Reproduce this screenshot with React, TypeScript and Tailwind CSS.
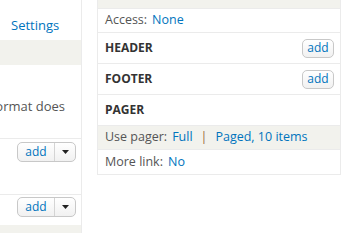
import React from "react";

const font = { fontFamily: '"Open Sans", "Liberation Sans", sans-serif' };

function SplitAdd() {
  return (
    <div className="flex h-[20px] w-[59px] items-stretch rounded-[5px] border border-[#c8c8c8] bg-gradient-to-b from-white to-[#f1f1f1] text-[12px] leading-none">
      <span className="flex w-[36px] items-center justify-center text-[#0074bd]">add</span>
      <span className="flex flex-1 items-center justify-center border-l border-[#d4d4d4]">
        <svg width="7" height="4" viewBox="0 0 7 4">
          <path d="M0 0h7L3.5 4z" fill="#222" />
        </svg>
      </span>
    </div>
  );
}

function AddButton() {
  return (
    <div className="flex h-[19px] w-[32px] items-center justify-center rounded-[5px] border border-[#c8c8c8] bg-gradient-to-b from-white to-[#f1f1f1] text-[12px] leading-none text-[#0074bd]">
      add
    </div>
  );
}

function Row({
  label,
  value,
  gray,
}: {
  label: string;
  value: React.ReactNode;
  gray?: boolean;
}) {
  return (
    <div
      className={`flex h-[24px] items-center border-b border-[#ebebeb] px-[7px] text-[12.5px] ${
        gray ? "bg-[#f2f2ed]" : "bg-white"
      }`}
    >
      <span className="text-[#555]">{label}</span>
      <span className="ml-[5px] text-[#0074bd]">{value}</span>
    </div>
  );
}

function Section({ title, add }: { title: string; add?: boolean }) {
  return (
    <div className="flex h-[31px] items-center justify-between border-b border-[#ebebeb] pl-[7px] pr-[6px]">
      <span className="text-[12px] font-bold text-[#333]">{title}</span>
      {add && <AddButton />}
    </div>
  );
}

export default function App() {
  return (
    <div className="flex h-[233px] w-[348px] overflow-hidden bg-white" style={font}>
      {/* left column, clipped */}
      <div className="flex w-[82px] shrink-0 flex-col border-r border-[#ebebeb]">
        <div className="h-[40px] pl-[11px] pt-[16px] text-[13px] leading-[18px] text-[#0074bd]">
          Settings
        </div>
        <div className="h-[25px] bg-[#f2f2ed]" />
        <div className="flex h-[74px] items-start justify-end overflow-hidden border-b border-[#ebebeb] pr-[16px] pt-[32px]">
          <span className="whitespace-nowrap text-[13px] leading-[18px] text-[#555]">
            The selected style or row format does
          </span>
        </div>
        <div className="flex h-[56px] items-start justify-end border-b border-[#ebebeb] pr-[5px] pt-[3px]">
          <SplitAdd />
        </div>
        <div className="flex h-[30px] items-start justify-end pr-[5px] pt-[2px]">
          <SplitAdd />
        </div>
        <div className="flex-1 bg-[#f2f2ed]" />
      </div>

      {/* right panel */}
      <div className="ml-[15px] w-[244px] shrink-0">
        <div className="-mt-[15px] border-x border-b border-[#ebebeb]">
          <Row label="Menu:" value="No menu" gray />
          <Row label="Access:" value="None" />
          <Section title="HEADER" add />
          <Section title="FOOTER" add />
          <Section title="PAGER" />
          <div className="flex h-[24px] items-center border-b border-[#ebebeb] bg-[#f2f2ed] px-[7px] text-[12.5px]">
            <span className="text-[#555]">Use pager:</span>
            <span className="ml-[5px] text-[#0074bd]">Full</span>
            <span className="mx-[8px] text-[#9a6a3a]">|</span>
            <span className="text-[#0074bd]">Paged, 10 items</span>
          </div>
          <div className="flex h-[24px] items-center px-[7px] text-[12.5px]">
            <span className="text-[#555]">More link:</span>
            <span className="ml-[5px] text-[#0074bd]">No</span>
          </div>
        </div>
      </div>
    </div>
  );
}
